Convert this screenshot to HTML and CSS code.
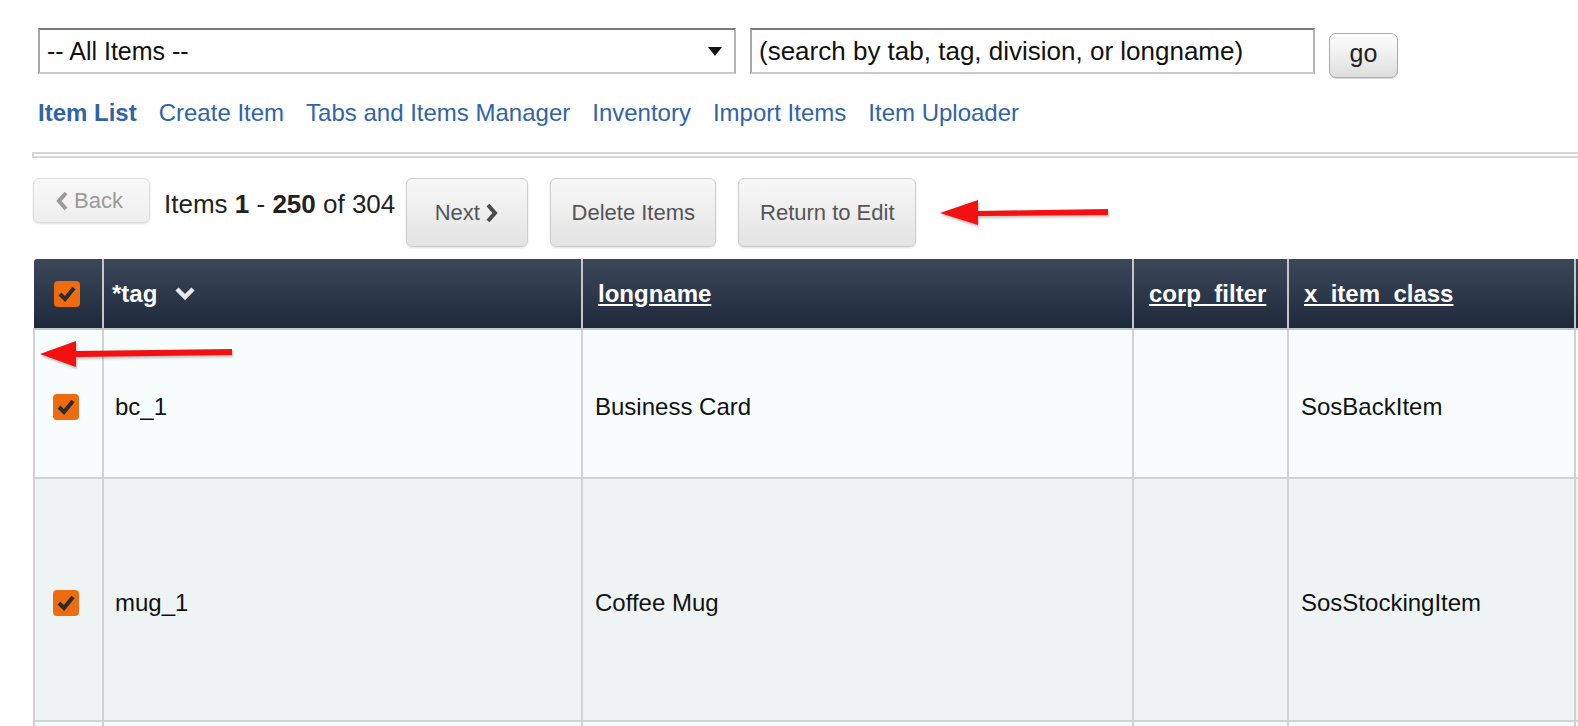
FILE: index.html
```html
<html>
<head>
  <title>Item List</title>
  <link rel="stylesheet" href="styles.css">
</head>
<body>
  <div class="page">
    <form class="searchbar" name="frmSearch" action="">
      <div class="selectbox">
        <span>-- All Items --</span>
        <span class="caret"></span>
      </div>
      <div class="searchbox">(search by tab, tag, division, or longname)</div>
      <button type="button" class="gobtn">go</button>
    </form>

    <div class="navlinks">
      <a href="#" class="current">Item List</a>
      <a href="#">Create Item</a>
      <a href="#">Tabs and Items Manager</a>
      <a href="#">Inventory</a>
      <a href="#">Import Items</a>
      <a href="#">Item Uploader</a>
    </div>

    <div class="divider"></div>

    <div class="toolbar">
      <button type="button" class="btn btnBack">
        <svg width="16" height="20" viewBox="0 0 16 20"><path d="M12 2 L5 10 L12 18" fill="none" stroke="#9a9a9a" stroke-width="4"/></svg>
        Back
      </button>
      <div class="count">Items <b>1</b> - <b>250</b> of 304</div>
      <button type="button" class="btn btnBig btnNext">Next
        <svg width="16" height="20" viewBox="0 0 16 20"><path d="M4 2 L11 10 L4 18" fill="none" stroke="#4a4a4a" stroke-width="4"/></svg>
      </button>
      <button type="button" class="btn btnBig btnDelete">Delete Items</button>
      <button type="button" class="btn btnBig btnReturn">Return to Edit</button>
    </div>

    <div class="gridwrap">
      <table class="grid">
        <tr class="head">
          <th class="colChk"><span class="chk"><svg width="26" height="26" viewBox="0 0 26 26"><path d="M6 13 L11 18 L20 7" fill="none" stroke="#2b2b2b" stroke-width="4"/></svg></span></th>
          <th class="colTag">*tag <svg class="sortarrow" width="22" height="16" viewBox="0 0 22 16"><path d="M3 3 L11 11 L19 3" fill="none" stroke="#e8e8e8" stroke-width="4.5"/></svg></th>
          <th class="colLong"><a href="#">longname</a></th>
          <th class="colCorp"><a href="#">corp_filter</a></th>
          <th class="colClass"><a href="#">x_item_class</a></th>
          <th class="colMore"></th>
        </tr>
        <tr class="row1">
          <td class="colChk"><span class="chk"><svg width="26" height="26" viewBox="0 0 26 26"><path d="M6 13 L11 18 L20 7" fill="none" stroke="#2b2b2b" stroke-width="4"/></svg></span></td>
          <td class="colTag">bc_1</td>
          <td>Business Card</td>
          <td></td>
          <td>SosBackItem</td>
          <td></td>
        </tr>
        <tr class="row2">
          <td class="colChk"><span class="chk"><svg width="26" height="26" viewBox="0 0 26 26"><path d="M6 13 L11 18 L20 7" fill="none" stroke="#2b2b2b" stroke-width="4"/></svg></span></td>
          <td class="colTag">mug_1</td>
          <td>Coffee Mug</td>
          <td></td>
          <td>SosStockingItem</td>
          <td></td>
        </tr>
        <tr class="row3">
          <td class="colChk"></td>
          <td></td><td></td><td></td><td></td><td></td>
        </tr>
      </table>
    </div>
  </div>

  <!-- annotation arrows -->
  <svg class="arrow arrowTop" width="180" height="34" viewBox="0 0 180 34">
    <path d="M38 15 L170 13 L170 19 L38 20 Z" fill="#f21010"/>
    <path d="M2 17 L40 4 L40 29 Z" fill="#f21010"/>
  </svg>
  <svg class="arrow arrowRow" width="200" height="34" viewBox="0 0 200 34">
    <path d="M36 14 L194 12 L194 18 L36 20 Z" fill="#f21010"/>
    <path d="M2 17 L38 4 L38 30 Z" fill="#f21010"/>
  </svg>
</body>
</html>
```

FILE: styles.css
```css
body { margin: 0; background: #ffffff; font-family: "Liberation Sans", Arial, Helvetica, sans-serif; overflow: hidden; }
.page { padding-top: 28px; }

.searchbar { display: flex; align-items: flex-start; margin: 0 0 0 38px; }
.selectbox { box-sizing: border-box; flex: 0 0 698px; height: 46px; display: flex; align-items: center; justify-content: space-between; padding: 0 12px 0 7px; font-size: 25px; color: #111; border: 2px solid #c9c9c9; border-top-color: #7a7a7a; border-left-color: #a9a9a9; border-right-color: #b5b5b5; }
.caret { width: 0; height: 0; border-left: 7px solid transparent; border-right: 7px solid transparent; border-top: 9px solid #111; }
.searchbox { box-sizing: border-box; flex: 0 0 565px; height: 46px; margin-left: 14px; display: flex; align-items: center; padding-left: 7px; font-size: 26px; color: #111; border: 2px solid #c9c9c9; border-top-color: #7a7a7a; border-left-color: #a9a9a9; border-right-color: #b5b5b5; }
.gobtn { box-sizing: border-box; flex: 0 0 69px; height: 45px; margin: 5px 0 0 14px; font-family: "Liberation Sans", Arial, sans-serif; font-size: 25px; color: #222; background: linear-gradient(#ffffff, #dedede); border: 1px solid #a9a9a9; border-radius: 7px; box-shadow: 0 1px 1px rgba(0,0,0,0.15); padding: 0 0 4px 0; }

.navlinks { display: flex; gap: 22px; margin: 21px 0 0 38px; font-size: 24px; line-height: 28px; }
.navlinks a { color: #2f64a8; text-decoration: none; }
.navlinks a.current { font-weight: bold; }

.divider { margin: 25px 0 0 32px; height: 2px; border: 2px solid #d6d6d6; border-right: 0; }

.toolbar { display: flex; align-items: flex-start; margin: 20px 0 0 33px; }
.btn { box-sizing: border-box; flex-shrink: 0; font-family: "Liberation Sans", Arial, sans-serif; font-size: 22px; color: #555; background: linear-gradient(#f8f8f8, #e3e3e3); border: 1px solid #cdcdcd; border-radius: 6px; box-shadow: 0 1px 2px rgba(0,0,0,0.12); display: flex; align-items: center; justify-content: center; gap: 4px; padding: 0; }
.btnBack { width: 117px; height: 45px; color: #9a9a9a; background: linear-gradient(#f9f9f9, #eeeeee); border-color: #dcdcdc; padding-right: 6px; }
.count { font-size: 26px; color: #222; margin: 11px 11px 0 14px; white-space: nowrap; }
.btnBig { height: 69px; margin-right: 22px; }
.btnNext { width: 122px; }
.btnDelete { width: 166px; }
.btnReturn { width: 178px; }

.gridwrap { margin: 12px 0 0 33px; overflow: hidden; }
.grid { border-collapse: collapse; width: 1635px; table-layout: fixed; font-size: 24px; color: #111; }
.grid th, .grid td { border: 2px solid #d0d3d5; padding: 6px 0 0 12px; text-align: left; vertical-align: middle; }
.grid .head th { height: 70px; padding: 0 0 0 15px; background: linear-gradient(#3c4759, #1e2a3b); color: #ffffff; font-weight: bold; border-top: 0; border-color: #c4c6c8; }
.grid .head th:first-child { border-left: 0; border-top-left-radius: 3px; }
.grid .head th a { color: #ffffff; }
.grid .head th.colTag { padding-left: 8px; }
.grid .head th.colChk { padding-left: 20px; }
.sortarrow { vertical-align: middle; margin-left: 10px; margin-top: -2px; }

.grid .colChk { width: 48px; padding-left: 18px; }
.colTag { width: 469px; }
.grid td.colTag { padding-left: 11px; }
.colLong { width: 534px; }
.colCorp { width: 138px; }
.colClass { width: 270px; }
.colMore { width: 86px; }

.chk { display: inline-block; width: 26px; height: 26px; background: #ef6b10; border-radius: 4px; vertical-align: middle; }
.chk svg { display: block; }

.row1 td { height: 149px; background: #f7fdfd; }
.row2 td { height: 243px; background: #eef4f4; }
.row3 td { height: 40px; background: #f7fdfd; }

.arrow { position: absolute; filter: drop-shadow(1px 2px 1px rgba(0,0,0,0.25)); }
.arrowTop { left: 938px; top: 196px; }
.arrowRow { left: 38px; top: 337px; }
```
